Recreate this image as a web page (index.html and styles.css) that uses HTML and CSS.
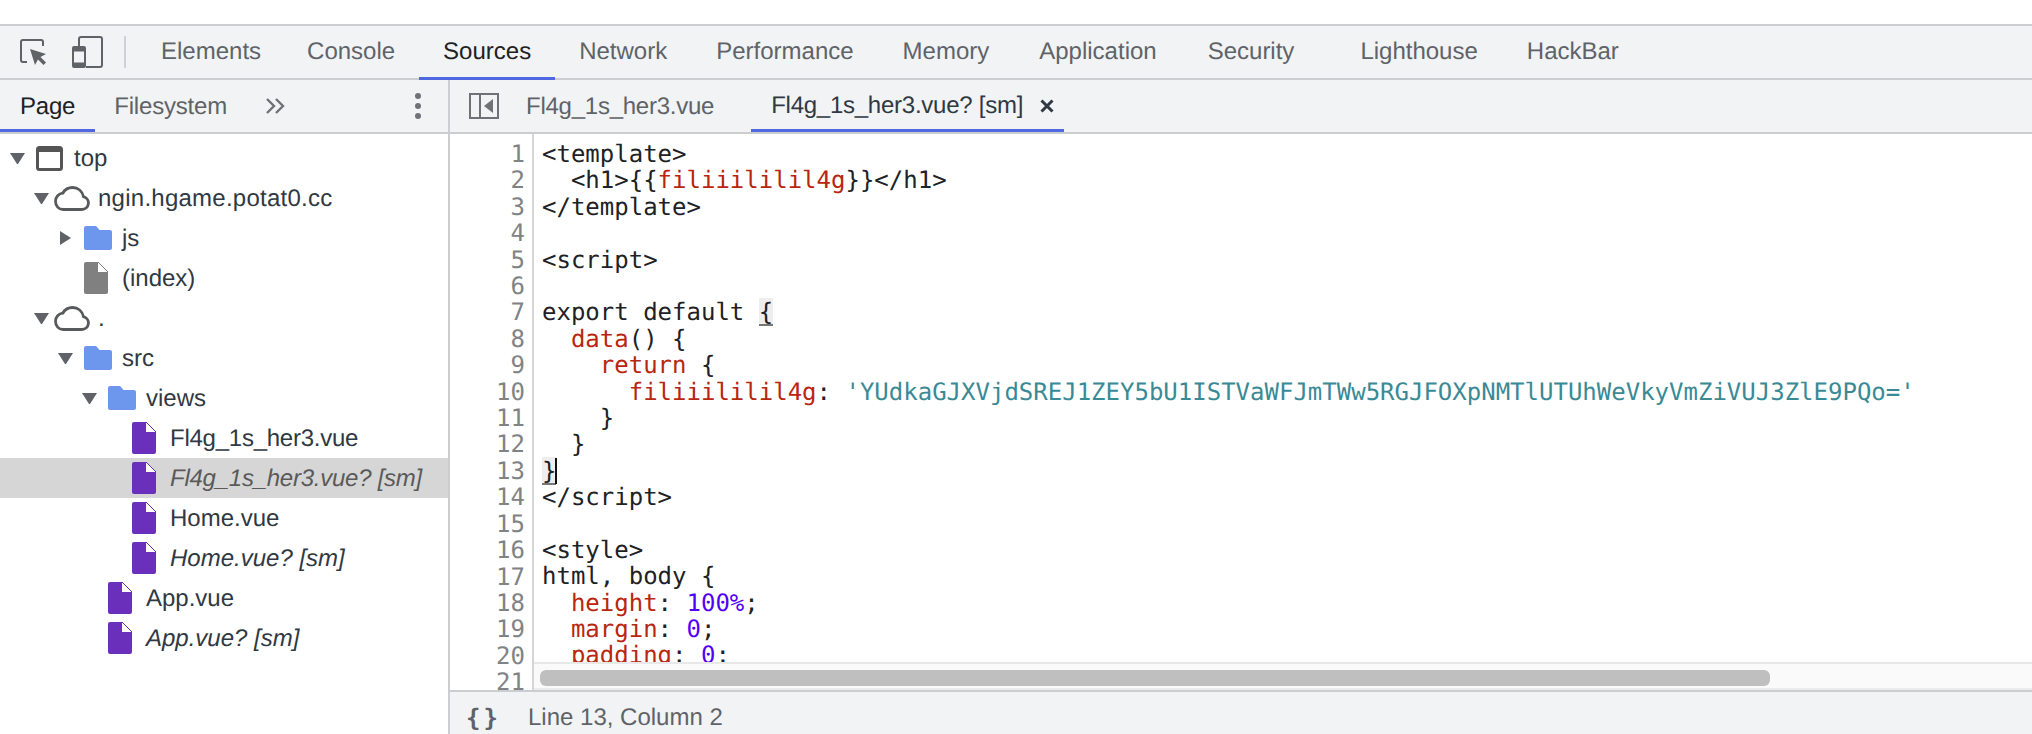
FILE: index.html
```html
<!DOCTYPE html>
<html>
<head>
    <title>DevTools Sources</title>
    <link rel="stylesheet" href="styles.css">
</head>
<body>
    <div class="page-gap"></div>
    <div class="toolbar">
        <div class="tool-icons">
            <svg class="inspect-icon" width="28" height="28" viewBox="0 0 28 28">
                <path d="M23 7V3a2 2 0 0 0-2-2H3a2 2 0 0 0-2 2v18a2 2 0 0 0 2 2h4" fill="none" stroke="#5f6368" stroke-width="2"/>
                <path d="M10 10l16 5-5.500 3 5.500 5.500-2.500 2.500-5.500-5.500-3 5.500z" fill="#5f6368"/>
            </svg>
            <svg class="device-icon" width="31" height="32" viewBox="0 0 31 32">
                <path d="M7 10V3a2 2 0 0 1 2-2h19a2 2 0 0 1 2 2v26a2 2 0 0 1-2 2H14" fill="none" stroke="#5f6368" stroke-width="2"/>
                <path d="M2 10h10a2 2 0 0 1 2 2v18a2 2 0 0 1-2 2H2a2 2 0 0 1-2-2V12a2 2 0 0 1 2-2zm0 5.500v11h10v-11z" fill="#5f6368" fill-rule="evenodd"/>
            </svg>
            <span class="tool-sep"></span>
        </div>
        <div class="main-tabs">
            <span class="main-tab">Elements</span>
            <span class="main-tab">Console</span>
            <span class="main-tab active">Sources</span>
            <span class="main-tab">Network</span>
            <span class="main-tab">Performance</span>
            <span class="main-tab">Memory</span>
            <span class="main-tab">Application</span>
            <span class="main-tab">Security</span>
            <span class="main-tab tab-extra">Lighthouse</span>
            <span class="main-tab">HackBar</span>
        </div>
    </div>
    <div class="panel">
        <div class="sidebar">
            <div class="side-tabs">
                <span class="side-tab active">Page</span>
                <span class="side-tab fs-tab">Filesystem</span>
                <span class="more-tabs">
                    <svg width="20" height="16" viewBox="0 0 20 16"><path d="M2 1l7 7-7 7M11 1l7 7-7 7" fill="none" stroke="#6e7175" stroke-width="2.400"/></svg>
                </span>
                <span class="kebab"><i></i><i></i><i></i></span>
            </div>
            <div class="tree">
                <div class="row level-0">
                    <span class="arrow down"></span>
                    <span class="icon"><svg width="28" height="25" viewBox="0 0 28 25"><rect x="1.500" y="1.500" width="24" height="22" rx="2" fill="none" stroke="#555" stroke-width="3"/><rect x="1" y="1" width="25" height="5" fill="#555"/></svg></span>
                    <span class="label">top</span>
                </div>
                <div class="row level-1">
                    <span class="arrow down"></span>
                    <span class="icon cloud"><svg width="36" height="25" viewBox="0 0 36 25"><use href="#cloud"/></svg></span>
                    <span class="label wide">ngin.hgame.potat0.cc</span>
                </div>
                <div class="row level-2">
                    <span class="arrow right"></span>
                    <span class="icon"><svg width="28" height="24" viewBox="0 0 28 24"><use href="#folder"/></svg></span>
                    <span class="label">js</span>
                </div>
                <div class="row level-2">
                    <span class="arrow"></span>
                    <span class="icon"><svg class="file-grey" width="24" height="32" viewBox="0 0 24 32"><use href="#file"/></svg></span>
                    <span class="label">(index)</span>
                </div>
                <div class="row level-1">
                    <span class="arrow down"></span>
                    <span class="icon cloud"><svg width="36" height="25" viewBox="0 0 36 25"><use href="#cloud"/></svg></span>
                    <span class="label">.</span>
                </div>
                <div class="row level-2">
                    <span class="arrow down"></span>
                    <span class="icon"><svg width="28" height="24" viewBox="0 0 28 24"><use href="#folder"/></svg></span>
                    <span class="label">src</span>
                </div>
                <div class="row level-3">
                    <span class="arrow down"></span>
                    <span class="icon"><svg width="28" height="24" viewBox="0 0 28 24"><use href="#folder"/></svg></span>
                    <span class="label">views</span>
                </div>
                <div class="row level-4">
                    <span class="arrow"></span>
                    <span class="icon"><svg class="file-purple" width="24" height="32" viewBox="0 0 24 32"><use href="#file"/></svg></span>
                    <span class="label tight">Fl4g_1s_her3.vue</span>
                </div>
                <div class="row level-4 selected">
                    <span class="arrow"></span>
                    <span class="icon"><svg class="file-purple" width="24" height="32" viewBox="0 0 24 32"><use href="#file"/></svg></span>
                    <span class="label tight mapped">Fl4g_1s_her3.vue? [sm]</span>
                </div>
                <div class="row level-4">
                    <span class="arrow"></span>
                    <span class="icon"><svg class="file-purple" width="24" height="32" viewBox="0 0 24 32"><use href="#file"/></svg></span>
                    <span class="label">Home.vue</span>
                </div>
                <div class="row level-4">
                    <span class="arrow"></span>
                    <span class="icon"><svg class="file-purple" width="24" height="32" viewBox="0 0 24 32"><use href="#file"/></svg></span>
                    <span class="label mapped">Home.vue? [sm]</span>
                </div>
                <div class="row level-3">
                    <span class="arrow"></span>
                    <span class="icon"><svg class="file-purple" width="24" height="32" viewBox="0 0 24 32"><use href="#file"/></svg></span>
                    <span class="label">App.vue</span>
                </div>
                <div class="row level-3">
                    <span class="arrow"></span>
                    <span class="icon"><svg class="file-purple" width="24" height="32" viewBox="0 0 24 32"><use href="#file"/></svg></span>
                    <span class="label mapped">App.vue? [sm]</span>
                </div>
            </div>
        </div>
        <div class="editor">
            <div class="file-tabs">
                <svg class="toggle-icon" width="30" height="26" viewBox="0 0 30 26">
                    <rect x="1" y="1" width="28" height="24" fill="none" stroke="#6e7175" stroke-width="2"/>
                    <path d="M11 1v24" stroke="#6e7175" stroke-width="2"/>
                    <path d="M24 6v14l-9-7z" fill="#6e7175"/>
                </svg>
                <span class="file-tab">Fl4g_1s_her3.vue</span>
                <span class="file-tab active">Fl4g_1s_her3.vue? [sm]
                    <svg class="close-x" width="14" height="14" viewBox="0 0 14 14"><path d="M1.500 1.500l11 11M12.500 1.500l-11 11" stroke="#303942" stroke-width="3"/></svg>
                </span>
            </div>
            <div class="source">
                <div class="gutter">
                    <div>1</div><div>2</div><div>3</div><div>4</div><div>5</div><div>6</div><div>7</div>
                    <div>8</div><div>9</div><div>10</div><div>11</div><div>12</div><div>13</div><div>14</div>
                    <div>15</div><div>16</div><div>17</div><div>18</div><div>19</div><div>20</div><div>21</div>
                </div>
                <div class="code-col">
                    <div class="code">
                        <div class="line">&lt;template&gt;</div>
                        <div class="line">  &lt;h1&gt;{{<span class="tok-red">filiiililil4g</span>}}&lt;/h1&gt;</div>
                        <div class="line">&lt;/template&gt;</div>
                        <div class="line"> </div>
                        <div class="line">&lt;script&gt;</div>
                        <div class="line"> </div>
                        <div class="line">export default <span class="bracket">{</span></div>
                        <div class="line">  <span class="tok-red">data</span>() {</div>
                        <div class="line">    <span class="tok-red">return</span> {</div>
                        <div class="line">      <span class="tok-red">filiiililil4g</span>: <span class="tok-str">'YUdkaGJXVjdSREJ1ZEY5bU1ISTVaWFJmTWw5RGJFOXpNMTlUTUhWeVkyVmZiVUJ3ZlE9PQo='</span></div>
                        <div class="line">    }</div>
                        <div class="line">  }</div>
                        <div class="line"><span class="bracket">}</span><span class="cursor"></span></div>
                        <div class="line">&lt;/script&gt;</div>
                        <div class="line"> </div>
                        <div class="line">&lt;style&gt;</div>
                        <div class="line">html, body {</div>
                        <div class="line">  <span class="tok-red">height</span>: <span class="tok-num">100%</span>;</div>
                        <div class="line">  <span class="tok-red">margin</span>: <span class="tok-num">0</span>;</div>
                        <div class="line">  <span class="tok-red">padding</span>: <span class="tok-num">0</span>;</div>
                    </div>
                    <div class="hscroll"><div class="hscroll-thumb"></div></div>
                </div>
            </div>
            <div class="status-bar">
                <span class="pretty">{}</span>
                <span>Line 13, Column 2</span>
            </div>
        </div>
    </div>
    <svg class="defs" width="0" height="0">
        <defs>
            <path id="folder" d="M2 0h9c1 0 1.500.400 2 1l2.500 3H26a2 2 0 0 1 2 2v16a2 2 0 0 1-2 2H2a2 2 0 0 1-2-2V2a2 2 0 0 1 2-2z" fill="#6d97ec"/>
            <g id="file">
                <path d="M2 0h12v10h10v20a2 2 0 0 1-2 2H2a2 2 0 0 1-2-2V2a2 2 0 0 1 2-2z" fill="currentColor"/>
                <path d="M14 0l10 10H14z" fill="#fff"/>
                <path d="M14 0l10 10" fill="none" stroke="currentColor" stroke-width="1"/>
            </g>
            <path id="cloud" d="M9 23.500h19a6.500 6.500 0 0 0 1.500-12.800C28.300 5 24 1.500 18.500 1.500c-4.300 0-7.800 2.300-9.700 5.700C4.700 7.500 1.500 11 1.500 15.300 1.500 19.800 4.700 23.500 9 23.500z" fill="none" stroke="#58595c" stroke-width="2.800"/>
        </defs>
    </svg>
</body>
</html>
```

FILE: styles.css
```css
* {
    box-sizing: border-box;
}
html, body {
    height: 100%;
}
body {
    margin: 0;
    display: flex;
    flex-direction: column;
    overflow: hidden;
    background: #fff;
    font-family: "Liberation Sans", Arial, sans-serif;
    font-size: 24px;
    color: #303942;
    text-rendering: geometricPrecision;
}
.page-gap {
    height: 24px;
    flex: none;
}
.defs {
    display: block;
    height: 0;
}

/* main toolbar */
.toolbar {
    display: flex;
    flex: none;
    height: 56px;
    background: #f1f3f4;
    border-top: 2px solid #cbcdd1;
    border-bottom: 2px solid #cbcdd1;
}
.tool-icons {
    display: flex;
    align-items: center;
    width: 137px;
    padding-left: 20px;
}
.inspect-icon {
    margin-top: 2px;
}
.device-icon {
    margin-left: 24px;
}
.tool-sep {
    width: 2px;
    height: 32px;
    margin-left: 21px;
    background: #d0d1d4;
}
.main-tabs {
    display: flex;
}
.main-tab {
    height: 54px;
    padding: 0 24px;
    line-height: 52px;
    color: #5f6368;
}
.main-tab.active {
    color: #202124;
    border-bottom: 3px solid #4f67e1;
}
/* label widths differ a little from the mac font */
.main-tab:nth-child(2) { margin-left: -2px; }
.main-tab:nth-child(5) { margin-left: 1px; }
.main-tab:nth-child(6) { margin-left: 1px; }
.main-tab:nth-child(7) { margin-left: 2px; }
.main-tab:nth-child(8) { margin-left: 3px; }
.main-tab:nth-child(10) { margin-left: 1px; }
.tab-extra {
    margin-left: 18px;
}

/* layout */
.panel {
    display: flex;
    flex: 1;
    min-height: 0;
}
.sidebar {
    width: 450px;
    flex: none;
    border-right: 2px solid #cbcdd1;
}
.editor {
    display: flex;
    flex-direction: column;
    flex: 1;
    min-width: 0;
}

/* sidebar */
.side-tabs {
    display: flex;
    align-items: center;
    height: 54px;
    background: #f1f3f4;
    border-bottom: 2px solid #cbcdd1;
}
.side-tab {
    height: 52px;
    padding: 0 20px;
    line-height: 54px;
    letter-spacing: -0.2px;
    color: #5f6368;
}
.side-tab.active {
    color: #202124;
    border-bottom: 3px solid #4f67e1;
}
.fs-tab {
    margin-left: -1px;
}
.more-tabs {
    margin-left: 18px;
    line-height: 0;
}
.kebab {
    display: flex;
    flex-direction: column;
    gap: 4px;
    margin-left: 130px;
}
.kebab i {
    width: 6px;
    height: 6px;
    border-radius: 50%;
    background: #6e7175;
}
.tree {
    padding-top: 4px;
}
.row {
    display: flex;
    align-items: center;
    height: 40px;
    white-space: pre;
}
.label {
    padding-top: 2px;
}
.wide {
    letter-spacing: 0.25px;
}
.tight {
    letter-spacing: -0.25px;
}
.level-0 { padding-left: 8px; }
.level-1 { padding-left: 32px; }
.level-2 { padding-left: 56px; }
.level-3 { padding-left: 80px; }
.level-4 { padding-left: 104px; }
.row.selected {
    background: #d6d6d6;
    color: #5a5a5a;
}
.arrow {
    width: 20px;
    flex: none;
}
.arrow.down {
    width: 15px;
    height: 11px;
    margin-left: 2px;
    margin-right: 3px;
    border-top: 11px solid #5f6368;
    border-left: 7.5px solid transparent;
    border-right: 7.5px solid transparent;
}
.arrow.right {
    width: 11px;
    height: 14px;
    margin-left: 4px;
    margin-right: 5px;
    border-left: 11px solid #5f6368;
    border-top: 7px solid transparent;
    border-bottom: 7px solid transparent;
}
.icon {
    display: flex;
    align-items: center;
    width: 46px;
    flex: none;
    padding-left: 8px;
}
.icon.cloud {
    padding-left: 2px;
}
.file-grey {
    color: #808080;
}
.file-purple {
    color: #6b30bb;
}
.mapped {
    font-style: italic;
}

/* file tabs */
.file-tabs {
    display: flex;
    align-items: center;
    flex: none;
    height: 54px;
    background: #f1f3f4;
    border-bottom: 2px solid #cbcdd1;
}
.toggle-icon {
    margin-left: 19px;
}
.file-tab {
    display: flex;
    align-items: center;
    height: 52px;
    margin-left: 27px;
    padding-top: 2px;
    letter-spacing: -0.25px;
    color: #5f6368;
}
.file-tab.active {
    margin-left: 37px;
    padding: 2px 10px 0 20px;
    color: #303942;
    border-bottom: 3px solid #4f67e1;
}
.close-x {
    margin-left: 17px;
}

/* code */
.source {
    display: flex;
    flex: 1;
    min-height: 0;
    border-bottom: 2px solid #cbcdd1;
    font-family: "DejaVu Sans Mono", "Liberation Mono", monospace;
    line-height: 26.4px;
}
.gutter {
    width: 84px;
    flex: none;
    padding: 7px 7px 0 0;
    overflow: hidden;
    text-align: right;
    color: #808386;
    border-right: 2px solid #d6d6d6;
}
.code-col {
    display: flex;
    flex-direction: column;
    flex: 1;
    min-width: 0;
}
.code {
    flex: 1;
    min-height: 0;
    padding: 7px 0 0 8px;
    overflow: hidden;
    color: #202124;
}
.line {
    height: 26.4px;
    white-space: pre;
}
.tok-red {
    color: #b8260f;
}
.tok-str {
    color: #3a8a96;
}
.tok-num {
    color: #5200f5;
}
.bracket {
    background: #eeeeee;
    box-shadow: inset 0 -2px 0 #777;
}
.cursor {
    display: inline-block;
    width: 2px;
    height: 26px;
    margin-left: -1px;
    vertical-align: top;
    background: #111;
}
.hscroll {
    flex: none;
    height: 28px;
    padding: 6px 0 0 6px;
    background: #fafafa;
    border-top: 2px solid #e8e8e8;
    border-bottom: 2px solid #ececec;
}
.hscroll-thumb {
    width: 1230px;
    height: 16px;
    border-radius: 6px;
    background: #bfbfbf;
}

/* status bar */
.status-bar {
    display: flex;
    align-items: center;
    flex: none;
    height: 42px;
    padding: 10px 0 0 16px;
    background: #f1f3f4;
    color: #5f6368;
}
.pretty {
    width: 62px;
    font-family: "DejaVu Sans Mono", monospace;
    font-weight: bold;
    letter-spacing: 3px;
}
```
